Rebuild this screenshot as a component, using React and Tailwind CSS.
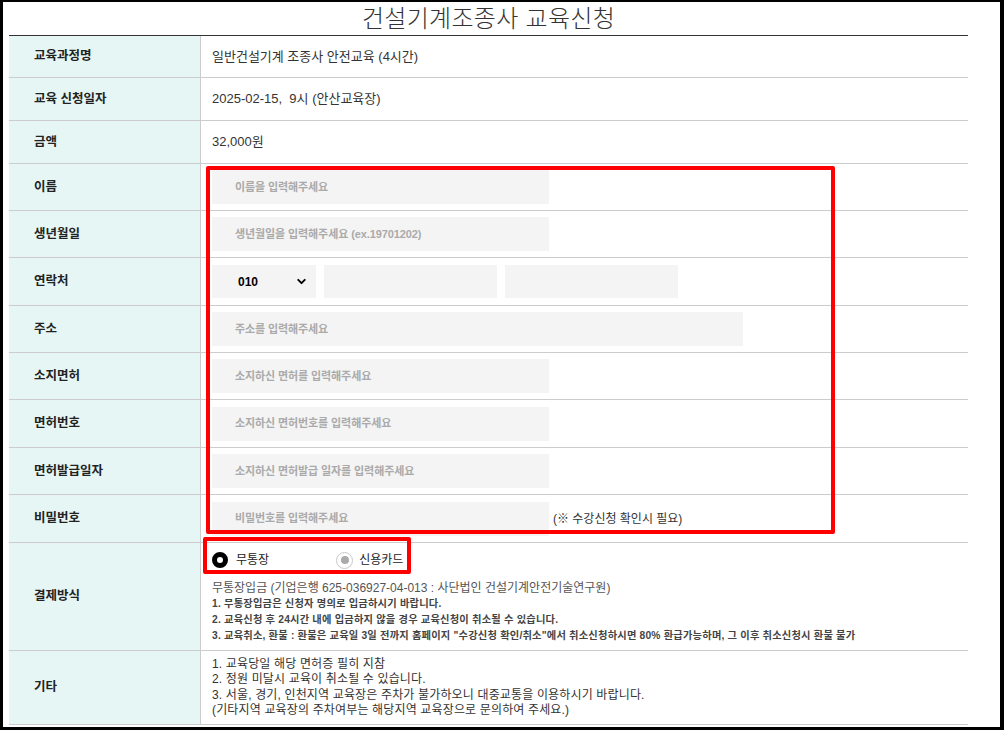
import React from 'react';
import { ChevronDown } from 'lucide-react';

const FONT = { fontFamily: "'Liberation Sans', 'Noto Sans CJK KR', sans-serif" };

function Row({ label, h, children, className = '' }) {
  return (
    <div className={`flex border-b border-[#cccccc] ${h}`}>
      <div className="w-[192px] shrink-0 bg-[#e6f6f5] border-r border-[#cccccc] flex items-center pl-[25px] text-[12.5px] font-bold text-[#222]">
        {label}
      </div>
      <div className={`flex-1 flex items-center pl-[11px] text-[13px] text-[#333] ${className}`}>{children}</div>
    </div>
  );
}

function Field({ placeholder, w = 'w-[337px]' }) {
  return (
    <div className={`${w} h-[34px] bg-[#f4f4f4] flex items-center pl-[23px] text-[11px] font-bold text-[#aaaaaa] tracking-[-0.1px]`}>
      {placeholder}
    </div>
  );
}

const INPUT_ROWS = [
  { label: '이름', h: 'h-[47px]', placeholder: '이름을 입력해주세요' },
  { label: '생년월일', h: 'h-[47px]', placeholder: '생년월일을 입력해주세요 (ex.19701202)' },
];

export default function App() {
  return (
    <div className="w-[1004px] h-[730px] bg-black pt-[2px] pl-[3px]" style={FONT}>
      <div className="relative w-[997px] h-[725px] bg-white pl-[6px] overflow-hidden">
        <div className="w-[959px]">
          <div className="h-[34px] border-b border-[#333] flex items-center justify-center text-[24px] text-[#333] font-light tracking-[0.3px]">
            건설기계조종사 교육신청
          </div>

          <Row label="교육과정명" h="h-[42px]">일반건설기계 조종사 안전교육 (4시간)</Row>
          <Row label="교육 신청일자" h="h-[43px]">2025-02-15,&nbsp; 9시 (안산교육장)</Row>
          <Row label="금액" h="h-[43px]">32,000원</Row>

          {INPUT_ROWS.map(r => (
            <Row key={r.label} label={r.label} h={r.h}>
              <Field placeholder={r.placeholder} />
            </Row>
          ))}

          <Row label="연락처" h="h-[48px]">
            <div className="flex gap-[8px]">
              <div className="w-[104px] h-[33px] bg-[#f4f4f4] flex items-center justify-between pl-[26px] pr-[8px] text-[12px] font-bold text-black">
                <span>010</span>
                <ChevronDown size={13} strokeWidth={3.5} />
              </div>
              <div className="w-[173px] h-[33px] bg-[#f4f4f4]" />
              <div className="w-[173px] h-[33px] bg-[#f4f4f4]" />
            </div>
          </Row>

          <Row label="주소" h="h-[47px]">
            <Field placeholder="주소를 입력해주세요" w="w-[531px]" />
          </Row>
          <Row label="소지면허" h="h-[47px]">
            <Field placeholder="소지하신 면허를 입력해주세요" />
          </Row>
          <Row label="면허번호" h="h-[48px]">
            <Field placeholder="소지하신 면허번호를 입력해주세요" />
          </Row>
          <Row label="면허발급일자" h="h-[47px]">
            <Field placeholder="소지하신 면허발급 일자를 입력해주세요" />
          </Row>
          <Row label="비밀번호" h="h-[48px]">
            <Field placeholder="비밀번호를 입력해주세요" />
            <span className="ml-[4px] text-[12px] text-[#333]">(※ 수강신청 확인시 필요)</span>
          </Row>

          <Row label="결제방식" h="h-[108px]" className="!items-start">
            <div className="flex flex-col pt-[3px]">
              <div className="h-[28px] flex items-center text-[12px] text-[#222]">
                <span className="w-[16px] h-[16px] rounded-full border-[5px] border-black bg-white" />
                <span className="ml-[8px]">무통장</span>
                <span className="ml-[67px] w-[17px] h-[17px] rounded-full border border-[#c8c8c8] bg-white flex items-center justify-center">
                  <span className="w-[8px] h-[8px] rounded-full bg-[#aaaaaa]" />
                </span>
                <span className="ml-[6px]">신용카드</span>
              </div>
              <div className="mt-[6px] leading-[16px] text-[12px] text-[#555]">
                무통장입금 (기업은행 625-036927-04-013 : 사단법인 건설기계안전기술연구원)
              </div>
              <div className="leading-[16px] text-[10.25px] font-bold text-[#444] tracking-[0.2px]">
                <p>1. 무통장입금은 신청자 명의로 입금하시기 바랍니다.</p>
                <p>2. 교육신청 후 24시간 내에 입금하지 않을 경우 교육신청이 취소될 수 있습니다.</p>
                <p>3. 교육취소, 환불 : 환불은 교육일 3일 전까지 홈페이지 "수강신청 확인/취소"에서 취소신청하시면 80% 환급가능하며, 그 이후 취소신청시 환불 불가</p>
              </div>
            </div>
          </Row>

          <Row label="기타" h="h-[74px]">
            <div className="leading-[15.5px] text-[12px] text-[#333] tracking-[0.15px]">
              <p>1. 교육당일 해당 면허증 필히 지참</p>
              <p>2. 정원 미달시 교육이 취소될 수 있습니다.</p>
              <p>3. 서울, 경기, 인천지역 교육장은 주차가 불가하오니 대중교통을 이용하시기 바랍니다.</p>
              <p>(기타지역 교육장의 주차여부는 해당지역 교육장으로 문의하여 주세요.)</p>
            </div>
          </Row>
        </div>

        <div className="absolute left-[203px] top-[164px] w-[629px] h-[368px] border-[4px] border-[#ff0000] rounded-[2px] pointer-events-none" />
        <div className="absolute left-[200px] top-[535px] w-[208px] h-[37px] border-[4px] border-[#ff0000] rounded-[2px] pointer-events-none" />
      </div>
    </div>
  );
}
